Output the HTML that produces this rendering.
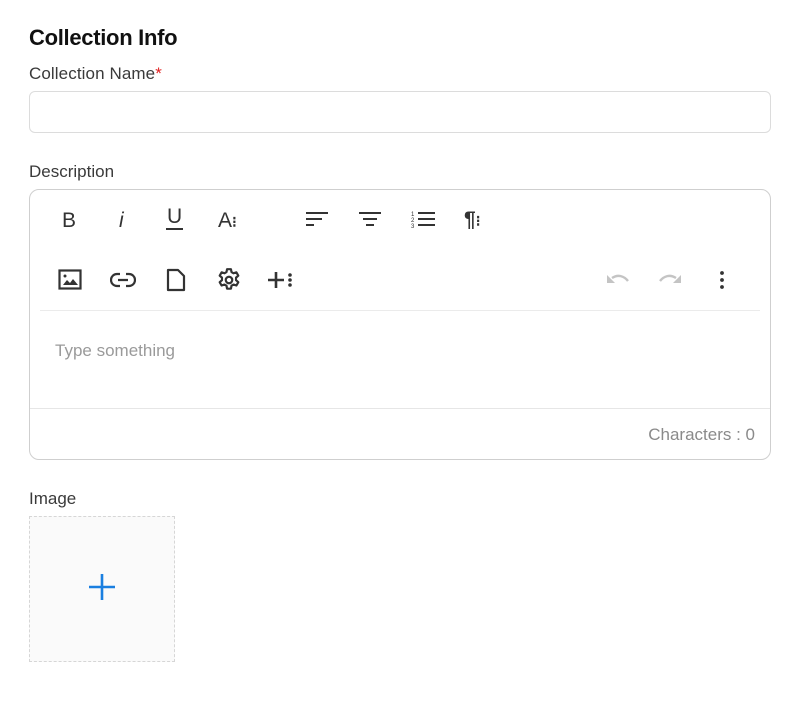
<!DOCTYPE html>
<html><head><style>
body{margin:0;background:#fff;font-family:"Liberation Sans",Arial,sans-serif;color:#333;}
.a{position:absolute}
svg{position:absolute}
</style></head><body>
<div class="a" style="left:29px;top:25px;font-size:22px;font-weight:bold;color:#111;letter-spacing:-0.3px">Collection Info</div>
<div class="a" style="left:29px;top:64px;font-size:17px;color:#3a3a3a;letter-spacing:0.1px">Collection Name<span style="color:#e02020">*</span></div>
<div class="a" style="left:29px;top:91px;width:740px;height:40px;border:1px solid #dcdcdc;border-radius:6px"></div>
<div class="a" style="left:29px;top:162px;font-size:17px;color:#3a3a3a">Description</div>
<div class="a" style="left:29px;top:189px;width:740px;height:269px;border:1px solid #cfcfcf;border-radius:10px"></div>
<div class="a" style="left:40px;top:310px;width:720px;height:1px;background:#ebebeb"></div>
<div class="a" style="left:30px;top:408px;width:740px;height:1px;background:#e6e6e6"></div>
<div class="a" style="left:55px;top:341px;font-size:17px;color:#9a9a9a">Type something</div>
<div class="a" style="right:44px;top:425px;font-size:17px;color:#8a8a8a">Characters : 0</div>

<div class="a" style="left:62px;top:209px;font-size:21px;color:#333">B</div>
<div class="a" style="left:119px;top:209px;font-size:21px;font-style:italic;color:#333">i</div>
<div class="a" style="left:166px;top:206px;font-size:21px;color:#333;border-bottom:2px solid #333;line-height:22px;padding:0 1px">U</div>
<div class="a" style="left:218px;top:209px;font-size:21px;color:#333">A<span style="font-size:15px;font-weight:bold">⁝</span></div>
<svg style="left:306px;top:210px" width="24" height="20"><g fill="#333"><rect x="0" y="2" width="22" height="2"/><rect x="0" y="8" width="16" height="2"/><rect x="0" y="14" width="8" height="2"/></g></svg>
<svg style="left:359px;top:210px" width="24" height="20"><g fill="#333"><rect x="0" y="2" width="22" height="2"/><rect x="4" y="8" width="14" height="2"/><rect x="7" y="14" width="8" height="2"/></g></svg>
<svg style="left:410px;top:209px" width="28" height="22"><g fill="#333"><rect x="8" y="3" width="17" height="2"/><rect x="8" y="9" width="17" height="2"/><rect x="8" y="15" width="17" height="2"/><text x="1" y="7" font-size="6" font-family="Liberation Sans">1</text><text x="1" y="13" font-size="6" font-family="Liberation Sans">2</text><text x="1" y="19" font-size="6" font-family="Liberation Sans">3</text></g></svg>
<div class="a" style="left:464px;top:208px;font-size:21px;font-weight:bold;color:#333">¶<span style="font-size:15px">⁝</span></div>

<svg style="left:58px;top:268px" width="25" height="24"><rect x="1.5" y="2.5" width="21" height="18" fill="none" stroke="#333" stroke-width="2.2"/><path d="M5 17l4-5 3 3 3-4 5 6z" fill="#333"/><circle cx="7" cy="8" r="1.5" fill="#333"/></svg>
<svg style="left:110px;top:270px" width="26" height="20"><path d="M10 4H7a6 6 0 000 12h3M16 4h3a6 6 0 010 12h-3M8 10h10" fill="none" stroke="#333" stroke-width="2.2"/></svg>
<svg style="left:166px;top:268px" width="20" height="24"><path d="M2 2h10l6 6v14H2z" fill="none" stroke="#333" stroke-width="2.2" stroke-linejoin="round"/></svg>
<svg style="left:216px;top:267px" width="26" height="26" viewBox="0 0 24 24"><path fill="none" stroke="#333" stroke-width="2" stroke-linejoin="round" d="M10.2 2h3.6l.5 2.7 1.9 1.1 2.6-.9 1.8 3.1-2.1 1.8v2.4l2.1 1.8-1.8 3.1-2.6-.9-1.9 1.1-.5 2.7h-3.6l-.5-2.7-1.9-1.1-2.6.9-1.8-3.1 2.1-1.8v-2.4L3.4 8l1.8-3.1 2.6.9 1.9-1.1z"/><circle cx="12" cy="12" r="3" fill="none" stroke="#333" stroke-width="2"/></svg>
<svg style="left:267px;top:270px" width="28" height="20"><path d="M1 10h16M9 2v16" stroke="#333" stroke-width="2.6"/><g fill="#333"><circle cx="23" cy="5" r="1.8"/><circle cx="23" cy="10" r="1.8"/><circle cx="23" cy="15" r="1.8"/></g></svg>

<svg style="left:605px;top:272px" width="26" height="16"><path d="M7 6c6-4 12-2 16 3" fill="none" stroke="#c4c4c4" stroke-width="2.4"/><path d="M2 3v8h8z" fill="#c4c4c4"/></svg>
<svg style="left:657px;top:272px" width="26" height="16"><path d="M19 6c-6-4-12-2-16 3" fill="none" stroke="#c4c4c4" stroke-width="2.4"/><path d="M24 3v8h-8z" fill="#c4c4c4"/></svg>
<svg style="left:716px;top:270px" width="12" height="20"><g fill="#333"><circle cx="6" cy="3" r="1.9"/><circle cx="6" cy="10" r="1.9"/><circle cx="6" cy="17" r="1.9"/></g></svg>

<div class="a" style="left:29px;top:489px;font-size:17px;color:#3a3a3a">Image</div>
<div class="a" style="left:29px;top:516px;width:144px;height:144px;border:1px dashed #d6d6d6;background:#fafafa"></div>
<svg style="left:88px;top:573px" width="28" height="28"><path d="M14 1v26M1 14h26" stroke="#1a7fe0" stroke-width="2.6"/></svg>
</body></html>
